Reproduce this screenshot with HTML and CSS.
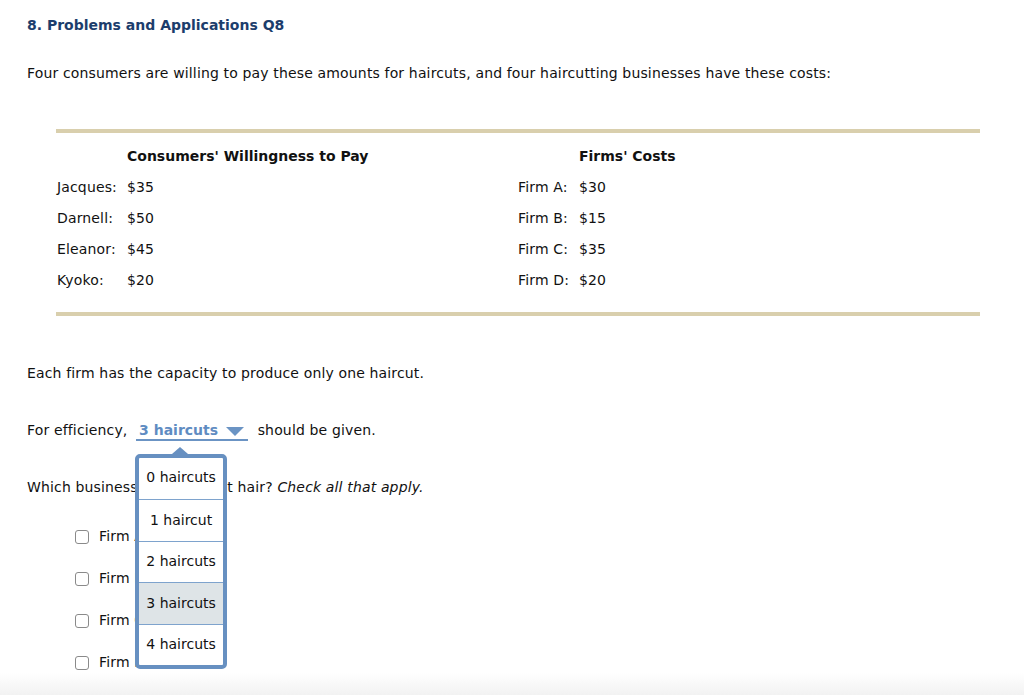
FILE: index.html
```html
<!DOCTYPE html>
<html lang="en">
<head>
<meta charset="utf-8">
<title>Problems and Applications Q8</title>
<link rel="stylesheet" href="styles.css">
</head>
<body>
<main class="page">
  <h1 class="title">8. Problems and Applications Q8</h1>
  <p class="intro">Four consumers are willing to pay these amounts for haircuts, and four haircutting businesses have these costs:</p>

  <section class="costs">
    <div class="side side-left">
      <span class="head">Consumers' Willingness to Pay</span>
      <span class="lbl">Jacques:</span><span class="val">$35</span>
      <span class="lbl">Darnell:</span><span class="val">$50</span>
      <span class="lbl">Eleanor:</span><span class="val">$45</span>
      <span class="lbl">Kyoko:</span><span class="val">$20</span>
    </div>
    <div class="side side-right">
      <span class="head">Firms' Costs</span>
      <span class="lbl">Firm A:</span><span class="val">$30</span>
      <span class="lbl">Firm B:</span><span class="val">$15</span>
      <span class="lbl">Firm C:</span><span class="val">$35</span>
      <span class="lbl">Firm D:</span><span class="val">$20</span>
    </div>
  </section>

  <p class="line cap">Each firm has the capacity to produce only one haircut.</p>

  <p class="line eff">For efficiency,
    <span class="select">
      <span class="sel-text">3 haircuts</span>
      <svg class="sel-arrow" width="18" height="9" viewBox="0 0 18 9"><polygon points="0,0 18,0 9,9" fill="#6b94c4"/></svg>
      <span class="menu">
        <span class="menu-item">0 haircuts</span>
        <span class="menu-item">1 haircut</span>
        <span class="menu-item">2 haircuts</span>
        <span class="menu-item active">3 haircuts</span>
        <span class="menu-item">4 haircuts</span>
      </span>
    </span>
    should be given.</p>

  <p class="line which">Which businesses should cut hair? <em>Check all that apply.</em></p>

  <ul class="checks">
    <li><span class="box"></span>Firm A</li>
    <li><span class="box"></span>Firm B</li>
    <li><span class="box"></span>Firm C</li>
    <li><span class="box"></span>Firm D</li>
  </ul>
</main>
<div class="footer-fade"></div>
</body>
</html>
```

FILE: styles.css
```css
html, body {
  margin: 0;
  padding: 0;
  background: #ffffff;
}
body {
  font-family: "DejaVu Sans", Verdana, sans-serif;
  font-size: 14px;
  letter-spacing: 0.15px;
  line-height: 17px;
  color: #111;
}
.page {
  padding: 17px 0 0 27px;
}
.title {
  margin: 0;
  font-size: 14px;
  letter-spacing: 0;
  line-height: 17px;
  font-weight: bold;
  color: #1c3d6c;
}
.intro {
  margin: 31px 0 0 0;
}
.costs {
  margin: 47px 0 0 29px;
  width: 924px;
  border-top: 4px solid #d9cfad;
  border-bottom: 4px solid #d9cfad;
  padding: 15px 0 23px 0;
  display: grid;
  grid-template-columns: 462px 1fr;
}
.side {
  display: grid;
  row-gap: 14px;
  align-content: start;
}
.side-left {
  grid-template-columns: 70px auto;
  padding-left: 1px;
}
.side-right {
  grid-template-columns: 61px auto;
}
.head {
  grid-column: 2;
  font-weight: bold;
  letter-spacing: 0;
  white-space: nowrap;
}
.lbl {
  grid-column: 1;
  white-space: nowrap;
}
.val {
  grid-column: 2;
}
.line {
  margin: 0;
}
.cap {
  margin-top: 49px;
}
.eff {
  margin-top: 40px;
}
.which {
  margin-top: 38px;
}
.select {
  position: relative;
  display: inline-flex;
  align-items: center;
  gap: 8px;
  margin: 0 5px 0 4px;
  padding: 0 4px 0 3px;
  border-bottom: 2px solid #6b94c4;
  height: 17px;
}
.sel-text {
  color: #5f8cc2;
  font-weight: bold;
  letter-spacing: 0;
}
.sel-arrow {
  display: block;
  margin-top: 1px;
}
.menu {
  position: absolute;
  left: -1px;
  top: 32px;
  width: 84px;
  border: 4px solid #6790c1;
  border-radius: 5px;
  background: #fff;
  display: flex;
  flex-direction: column;
  z-index: 5;
}
.menu::before {
  content: "";
  position: absolute;
  top: -11px;
  left: 33px;
  border-left: 8px solid transparent;
  border-right: 8px solid transparent;
  border-bottom: 7px solid #6790c1;
}
.menu-item {
  height: 41.5px;
  box-sizing: border-box;
  display: flex;
  align-items: center;
  justify-content: center;
  color: #111;
  font-weight: normal;
  letter-spacing: 0;
  white-space: nowrap;
  border-top: 1px solid #7ea3cd;
}
.menu-item:first-child {
  border-top: none;
  height: 41px;
  padding-bottom: 2px;
}
.menu-item.active {
  background: #dee4e7;
}
.checks {
  list-style: none;
  margin: 32px 0 0 0;
  padding: 0 0 0 48px;
  display: flex;
  flex-direction: column;
  gap: 25px;
}
.checks li {
  display: flex;
  align-items: center;
  gap: 10px;
  height: 17px;
}
.box {
  width: 12px;
  height: 12px;
  border: 1.5px solid #8a8a8a;
  border-radius: 3px;
  background: #fff;
}
.footer-fade {
  position: fixed;
  left: 0;
  right: 0;
  bottom: 0;
  height: 22px;
  background: linear-gradient(#ffffff, #f2f2f2);
}
```
